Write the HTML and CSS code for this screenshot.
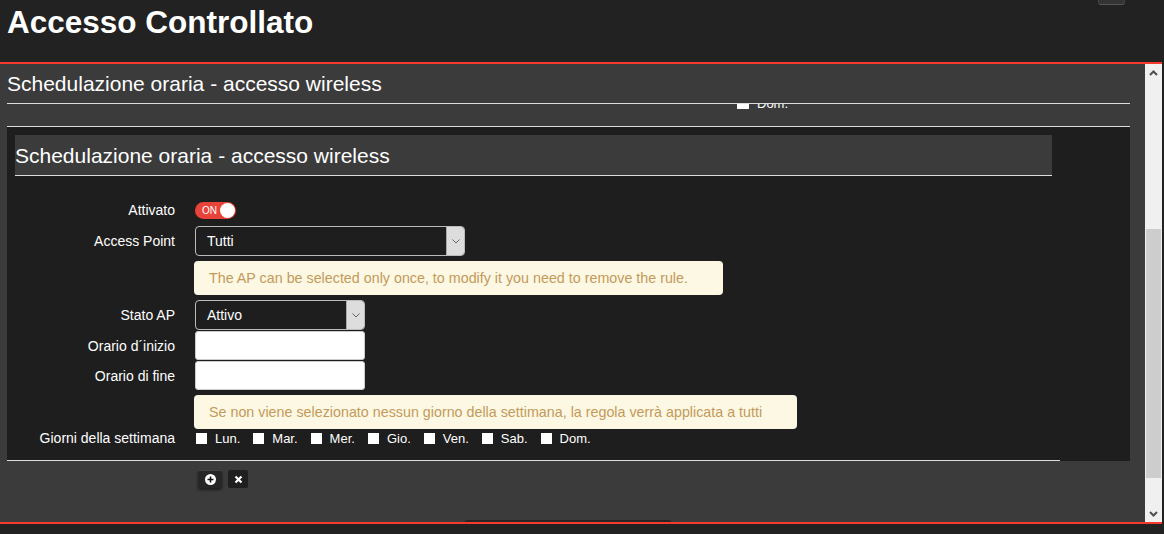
FILE: index.html
```html
<!DOCTYPE html>
<html lang="it">
<head>
  <meta charset="UTF-8">
  <title>Accesso Controllato</title>
  <link rel="stylesheet" href="styles.css">
</head>
<body>

<header class="page-head">
  <h1>Accesso Controllato</h1>
  <button class="top-btn" type="button"></button>
</header>

<section class="panel">
  <div class="panel-body">
    <h2 class="panel-title">Schedulazione oraria - accesso wireless</h2>

    <!-- previous rule, scrolled up under the title -->
    <div class="peek">
      <div class="days peek-days">
        <span class="day"><span class="cb"></span>Dom.</span>
      </div>
    </div>

    <div class="rule">
      <div class="rule-form">
        <h3 class="rule-title">Schedulazione oraria - accesso wireless</h3>

        <div class="fields">
          <div class="field f-toggle">
            <label>Attivato</label>
            <div><span class="toggle"><span class="toggle-txt">ON</span><span class="knob"></span></span></div>
          </div>

          <div class="field f-ap">
            <label>Access Point</label>
            <div class="select wide">
              <span class="select-val">Tutti</span>
              <span class="select-arrow">
                <svg width="8" height="5" viewBox="0 0 8 5"><polyline points="0.5,0.5 4,4 7.5,0.5" fill="none" stroke="#666" stroke-width="1"/></svg>
              </span>
            </div>
          </div>

          <div class="field f-note">
            <label></label>
            <div class="note note-ap">The AP can be selected only once, to modify it you need to remove the rule.</div>
          </div>

          <div class="field f-state">
            <label>Stato AP</label>
            <div class="select">
              <span class="select-val">Attivo</span>
              <span class="select-arrow">
                <svg width="8" height="5" viewBox="0 0 8 5"><polyline points="0.5,0.5 4,4 7.5,0.5" fill="none" stroke="#666" stroke-width="1"/></svg>
              </span>
            </div>
          </div>

          <div class="field f-input">
            <label>Orario d´inizio</label>
            <input class="text-in" type="text">
          </div>

          <div class="field f-input">
            <label>Orario di fine</label>
            <input class="text-in" type="text">
          </div>

          <div class="field f-note2">
            <label></label>
            <div class="note note-days">Se non viene selezionato nessun giorno della settimana, la regola verrà applicata a tutti</div>
          </div>

          <div class="field f-days">
            <label>Giorni della settimana</label>
            <div class="days">
              <span class="day"><span class="cb"></span>Lun.</span>
              <span class="day"><span class="cb"></span>Mar.</span>
              <span class="day"><span class="cb"></span>Mer.</span>
              <span class="day"><span class="cb"></span>Gio.</span>
              <span class="day"><span class="cb"></span>Ven.</span>
              <span class="day"><span class="cb"></span>Sab.</span>
              <span class="day"><span class="cb"></span>Dom.</span>
            </div>
          </div>
        </div>
      </div>
    </div>

    <div class="actions">
      <button class="btn btn-add" type="button">
        <svg width="11" height="11" viewBox="0 0 11 11"><circle cx="5.5" cy="5.5" r="5.5" fill="#fff"/><path d="M5.5 2.5v6M2.5 5.5h6" stroke="#111" stroke-width="1.6"/></svg>
      </button>
      <button class="btn btn-del" type="button">
        <svg width="9" height="9" viewBox="0 0 9 9"><path d="M1.5 1.5l6 6M7.5 1.5l-6 6" stroke="#fff" stroke-width="2.2"/></svg>
      </button>
    </div>

    <div class="peek-btn"></div>
  </div>

  <div class="scrollbar">
    <span class="sb-arrow">
      <svg width="9" height="6" viewBox="0 0 9 6"><polyline points="1,5 4.5,1.5 8,5" fill="none" stroke="#505050" stroke-width="2"/></svg>
    </span>
    <span class="sb-thumb"></span>
    <span class="sb-arrow sb-down">
      <svg width="9" height="6" viewBox="0 0 9 6"><polyline points="1,1 4.5,4.5 8,1" fill="none" stroke="#505050" stroke-width="2"/></svg>
    </span>
  </div>
</section>

</body>
</html>
```

FILE: styles.css
```css
body {
  margin: 0;
  height: 534px;
  overflow: hidden;
  background: #222;
  color: #fff;
  font-family: 'Liberation Sans', Arial, sans-serif;
}

/* Page header */
.page-head {
  height: 62px;
  display: flex;
  justify-content: space-between;
  align-items: flex-start;
  padding: 0 7px;
}

.page-head h1 {
  margin: 0;
  padding-top: 4px;
  font-size: 31.5px;
  line-height: 36px;
  font-weight: bold;
}

.top-btn {
  width: 27px;
  height: 24px;
  margin-top: -19px;
  margin-right: 32px;
  background: #333;
  border: 1px solid #444;
  border-bottom-color: #555;
  border-radius: 3px;
}

/* Panel */
.panel {
  display: flex;
  height: 458px;
  margin-right: 2px;
  border-top: 2px solid #f83a2e;
  border-bottom: 2px solid #f83a2e;
  background: #3b3b3b;
}

.panel-body {
  flex: 1;
  padding: 0 15px 0 7px;
  overflow: hidden;
}

.panel-title {
  margin: 0;
  padding: 8px 0 7px;
  font-size: 21px;
  line-height: 24px;
  font-weight: normal;
  border-bottom: 1px solid #ddd;
}

.peek {
  height: 22px;
  overflow: hidden;
  border-bottom: 1px solid #ddd;
}

.peek-days {
  margin-top: -8px;
  padding-left: 729px;
  height: 14px;
}

.rule {
  background: #1e1e1e;
  padding-top: 8px;
}

.rule-form {
  width: 1053px;
  border-bottom: 1px solid #ddd;
}

.rule-title {
  margin: 0 8px;
  padding: 9px 0 7px;
  background: #3b3b3b;
  font-size: 21px;
  line-height: 24px;
  font-weight: normal;
  border-bottom: 1px solid #ddd;
}

.fields {
  padding: 22px 0 17px;
}

.field {
  display: grid;
  grid-template-columns: 168px auto;
  column-gap: 20px;
  align-items: center;
  justify-items: start;
}

.field label {
  justify-self: end;
  font-size: 14px;
}

.f-toggle { height: 24px; }
.f-ap { margin-top: 4px; }
.f-note { margin-top: 5px; }
.f-state { margin-top: 5px; }
.f-input { margin-top: 1px; }
.f-note2 { margin-top: 5px; }
.f-days { margin-top: 1px; height: 13px; }

/* Toggle */
.toggle {
  display: flex;
  align-items: center;
  justify-content: space-between;
  width: 41px;
  height: 17px;
  border-radius: 9px;
  background: #e8433a;
}

.toggle-txt {
  padding-left: 7px;
  font-size: 10px;
}

.knob {
  width: 15px;
  height: 15px;
  margin-right: 1px;
  border-radius: 50%;
  background: #fff;
}

/* Select */
.select {
  display: flex;
  box-sizing: border-box;
  width: 170px;
  height: 30px;
  border: 1px solid #bbb;
  border-radius: 4px;
  background: #1e1e1e;
  overflow: hidden;
}

.select.wide {
  width: 270px;
}

.select-val {
  flex: 1;
  padding-left: 11px;
  font-size: 14px;
  line-height: 28px;
}

.select-arrow {
  display: flex;
  align-items: center;
  justify-content: center;
  width: 17px;
  background: #ddd;
  border-left: 1px solid #aaa;
}

.text-in {
  box-sizing: border-box;
  width: 170px;
  height: 29px;
  margin: 0;
  border: 1px solid #ccc;
  border-radius: 3px;
  background: #fff;
}

/* Notes */
.note {
  box-sizing: border-box;
  height: 34px;
  margin-left: -1px;
  padding: 8px 15px;
  border-radius: 4px;
  background: #fcf8e4;
  color: #c49a5a;
  font-size: 14.3px;
  line-height: 18px;
  white-space: nowrap;
}

.note-ap { width: 529px; }
.note-days { width: 603px; }

/* Days */
.days {
  display: flex;
  align-items: center;
  margin-left: 1px;
}

.day {
  display: inline-flex;
  align-items: center;
  margin-right: 13px;
  font-size: 13px;
}

.cb {
  width: 11px;
  height: 11px;
  margin-right: 8px;
  background: #fff;
}

.peek-days .cb {
  width: 12px;
  height: 12px;
}

/* Buttons under the rule */
.actions {
  display: flex;
  gap: 6px;
  padding: 9px 0 0 191px;
}

.btn {
  display: flex;
  align-items: center;
  justify-content: center;
  height: 18px;
  padding: 0;
  border: none;
  border-radius: 2px;
}

.btn-add {
  width: 24px;
  background: #262626;
  border-top: 1px solid #444;
  box-shadow: 0 2px 3px rgba(0, 0, 0, 0.5);
}

.btn-del {
  width: 20px;
  background: #1f1f1f;
}

.peek-btn {
  width: 208px;
  height: 4px;
  margin: 32px 0 0 457px;
  background: #262626;
  border-radius: 4px 4px 0 0;
}

/* Fake scrollbar */
.scrollbar {
  display: flex;
  flex-direction: column;
  width: 17px;
  background: #f0f0f0;
}

.sb-arrow {
  display: flex;
  align-items: center;
  justify-content: center;
  height: 17px;
}

.sb-down {
  margin-top: auto;
}

.sb-thumb {
  height: 249px;
  margin: 148px 1px 0;
  background: #cdcdcd;
}
```
